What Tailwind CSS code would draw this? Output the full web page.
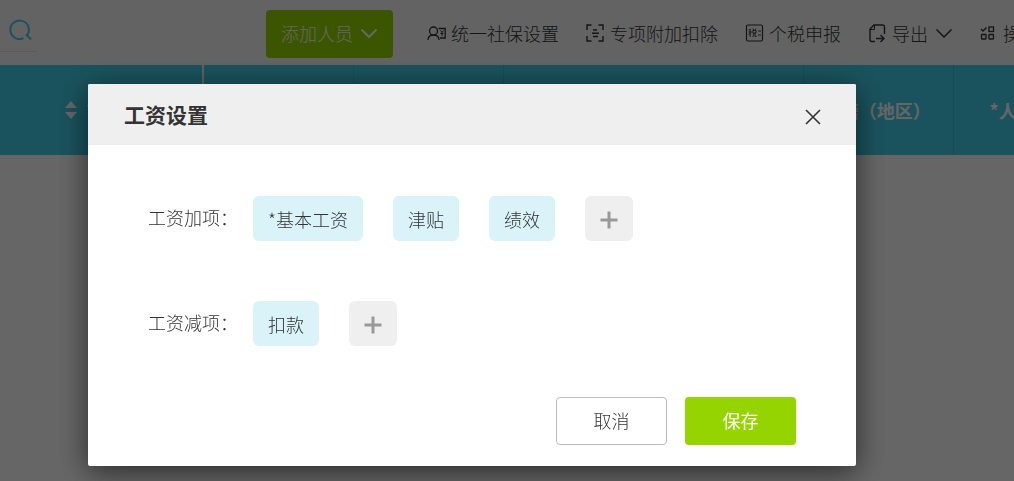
<!DOCTYPE html>
<html lang="zh-CN">
<head>
  <meta charset="UTF-8">
  <meta name="viewport" content="width=device-width, initial-scale=1.0">
  <title>工资设置</title>
  <script src="https://cdn.jsdelivr.net/npm/@tailwindcss/browser@4"></script>
</head>
<body class="min-h-screen overflow-hidden bg-white text-[18px] leading-6 text-[#333] font-['Noto_Sans_CJK_SC',sans-serif]">

  <!-- Toolbar -->
  <header class="flex h-[65px] items-start overflow-hidden bg-[#f8f8f8] whitespace-nowrap">
    <div class="flex h-[52px] w-[37px] shrink-0 items-center border-b border-[#e2e2e2] pt-2 pl-2">
      <button type="button" aria-label="搜索">
        <svg class="size-6" viewBox="0 0 24 24" fill="none" stroke="#41cfe8" stroke-width="2">
          <path d="M15.500 20.200A9.300 9.300 0 1 1 19 17.400"/>
          <path d="M18 16.500l5 5"/>
        </svg>
      </button>
    </div>
    <nav class="ml-[229px] flex shrink-0 items-center gap-[27px] pt-[10px] font-light">
      <button type="button" class="mr-[7px] flex h-12 w-[127px] items-center gap-2 rounded bg-[#96d600] pb-0.5 pl-[15px] text-white">
        添加人员
        <svg class="h-4 w-4" viewBox="0 0 16 16" fill="none" stroke="currentColor" stroke-width="2"><path d="M0.500 4.500L8 12l7.500-7.500"/></svg>
      </button>
      <button type="button" class="flex items-center gap-1 pb-0.5">
        <svg class="size-5" viewBox="0 0 20 20" fill="none" stroke="currentColor" stroke-width="1.300">
          <circle cx="6.500" cy="8" r="4"/>
          <path d="M1 17c0-3 2-5 5.500-5s5.500 2 5.500 5"/>
          <path d="M11.500 5.500h6.700v9.500H13"/>
          <path d="M13.500 7.500l1.500 2 1.500-2M15 9.500v3.500M13.500 10.500h3" stroke-width="1"/>
        </svg>
        统一社保设置
      </button>
      <button type="button" class="flex items-center gap-1 pb-0.5">
        <svg class="size-5" viewBox="0 0 20 20" fill="none" stroke="currentColor" stroke-width="1.400">
          <path d="M1 7V2h4.500M12.500 2H17v5M1 13v5h4.500M12.500 18H17v-5"/>
          <path d="M7 7h4M6 10.300h7M7 13.500h5"/>
        </svg>
        专项附加扣除
      </button>
      <button type="button" class="flex items-center gap-1 pb-0.5">
        <svg class="size-5" viewBox="0 0 20 20" fill="none" stroke="currentColor" stroke-width="1.200">
          <rect x="1.500" y="2" width="16" height="16" rx="1.500"/>
          <path d="M6 6L3.500 7M3.500 9H7M5.200 7v7M5 10l-1.500 2M7.800 5.500l1 1.500M11 5.500L10 7M7.800 7.500H11v2.500H7.800zM8.800 10c0 2-.5 3-1.300 4M10 10v3.500h1.500M13 8h3M13 12h3" stroke-width="0.900"/>
        </svg>
        个税申报
      </button>
      <button type="button" class="flex items-center gap-1 pb-0.5">
        <svg class="size-5" viewBox="0 0 20 20" fill="none" stroke="currentColor" stroke-width="1.400">
          <path d="M7 18.500H4a2 2 0 0 1-2-2V6l4-4h8.500a2 2 0 0 1 2 2v7"/>
          <path d="M2 6.500h4.500V2" stroke-width="1"/>
          <path d="M8 15.500h8M12.500 12l3.500 3.500-3.500 3.500"/>
        </svg>
        导出
        <svg class="ml-1 h-4 w-4" viewBox="0 0 16 16" fill="none" stroke="currentColor" stroke-width="1.500"><path d="M0.500 4.500L8 12l7.500-7.500"/></svg>
      </button>
      <button type="button" class="flex items-center gap-1 pb-0.5">
        <svg class="size-5" viewBox="0 0 20 20" fill="none" stroke="currentColor" stroke-width="1.300">
          <path d="M2 6l2 2 3.500-3.500"/>
          <rect x="10" y="4" width="4.500" height="4.500"/>
          <rect x="2.500" y="11.500" width="4.500" height="4.500" rx="0.500"/>
          <rect x="10" y="11.500" width="4.500" height="4.500" rx="0.500"/>
        </svg>
        操作
      </button>
    </nav>
  </header>

  <!-- Staff table -->
  <div class="overflow-hidden">
    <table class="w-[1104px] table-fixed border-collapse bg-[#41cfe8] text-white">
      <thead>
        <tr class="h-[90px] text-left font-bold">
          <th class="w-[203px] border-r-2 border-[#f4f4f4] pl-16">
            <span class="flex items-center gap-2">
              <svg class="h-[18px] w-[14px]" viewBox="0 0 14 18" fill="currentColor"><path d="M7 0l6 7H1zM7 18l6-7H1z"/></svg>
              *姓名
            </span>
          </th>
          <th class="w-[150px] border-r border-[#3bbfd6] pl-[34px]">*工号</th>
          <th class="w-[150px] border-r border-[#3bbfd6] pl-[34px]">*证件类型</th>
          <th class="w-[300px] border-r border-[#3bbfd6] pl-[34px]">*证件号码</th>
          <th class="w-[150px] border-r border-[#3bbfd6] pl-[10px]">*国籍（地区）</th>
          <th class="pl-9">*人员状态</th>
        </tr>
      </thead>
    </table>
  </div>

  <div class="fixed inset-0 bg-black/60"></div>

  <!-- Salary settings dialog -->
  <section role="dialog" aria-labelledby="dialog-title" class="fixed top-[84px] left-[88px] w-full max-w-[768px] rounded-xs bg-white shadow-[0_6px_30px_rgba(0,0,0,0.6)]">
    <div class="flex h-[61px] items-center justify-between rounded-t-xs bg-[#efefef] pr-[34px] pl-9">
      <h2 id="dialog-title" class="pb-0.5 text-[21px] font-bold">工资设置</h2>
      <button type="button" aria-label="关闭" class="pt-1">
        <svg class="size-[18px]" viewBox="0 0 18 18" fill="none" stroke="#333" stroke-width="1.600"><path d="M2 2l14 14M16 2L2 16"/></svg>
      </button>
    </div>

    <div class="flex flex-col gap-[60px] px-[60px] pt-[51px] font-light">
      <div class="flex h-[45px] items-center">
        <span class="w-[105px] pb-1">工资加项：</span>
        <div class="flex gap-[30px]">
          <button type="button" class="h-[45px] rounded-md bg-[#d9f3f9] px-[15px]">*基本工资</button>
          <button type="button" class="h-[45px] rounded-md bg-[#d9f3f9] px-[15px]">津贴</button>
          <button type="button" class="h-[45px] rounded-md bg-[#d9f3f9] px-[15px]">绩效</button>
          <button type="button" aria-label="添加加项" class="flex h-[45px] w-12 items-center justify-center rounded-md bg-[#efefef] pt-[3px]">
            <svg class="size-[18px]" viewBox="0 0 18 18" fill="none" stroke="#999" stroke-width="3"><path d="M9 0.500v17M0.500 9h17"/></svg>
          </button>
        </div>
      </div>
      <div class="flex h-[45px] items-center">
        <span class="w-[105px] pb-1">工资减项：</span>
        <div class="flex gap-[30px]">
          <button type="button" class="h-[45px] rounded-md bg-[#d9f3f9] px-[15px]">扣款</button>
          <button type="button" aria-label="添加减项" class="flex h-[45px] w-12 items-center justify-center rounded-md bg-[#efefef] pt-[3px]">
            <svg class="size-[18px]" viewBox="0 0 18 18" fill="none" stroke="#999" stroke-width="3"><path d="M9 0.500v17M0.500 9h17"/></svg>
          </button>
        </div>
      </div>
    </div>

    <div class="flex justify-end gap-[18px] px-[60px] pt-[51px] pb-[21px]">
      <button type="button" class="h-12 w-[111px] rounded border border-[#bbb] bg-white pb-0.5 font-light">取消</button>
      <button type="button" class="h-12 w-[111px] rounded bg-[#96d400] pb-0.5 text-white">保存</button>
    </div>
  </section>

</body>
</html>
